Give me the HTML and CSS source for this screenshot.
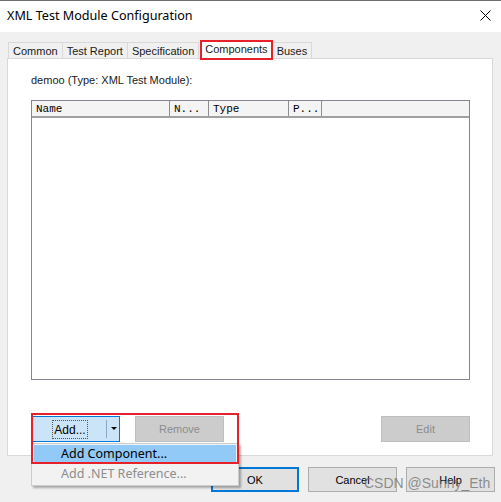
FILE: index.html
```html
<!DOCTYPE html>
<html lang="en">
<head>
<meta charset="UTF-8" />
<title>XML Test Module Configuration</title>
<link rel="stylesheet" href="styles.css">
</head>
<body>

<div class="window">
  <div class="titlebar">
    <span class="title">XML Test Module Configuration</span>
    <svg class="close" width="11" height="11" viewBox="0 0 11 11">
      <path d="M0.5 0.5 L10.5 10.5 M10.5 0.5 L0.5 10.5" stroke="#000" stroke-width="1" />
    </svg>
  </div>

  <div class="content">
    <div class="tabs">
      <div class="tab">Common</div>
      <div class="tab">Test Report</div>
      <div class="tab">Specification</div>
      <div class="tab active">Components</div>
      <div class="tab">Buses</div>
    </div>

    <div class="panel">
      <div class="caption">demoo (Type: XML Test Module):</div>
      <div class="listview">
        <div class="list-head">
          <div class="col col-name">Name</div>
          <div class="col col-n">N...</div>
          <div class="col col-type">Type</div>
          <div class="col col-p">P...</div>
        </div>
      </div>
      <div class="actions">
        <div class="split">
          <span class="split-main"><span class="focus">Add...</span></span>
          <span class="split-arrow"></span>
        </div>
        <button class="btn disabled">Remove</button>
        <span class="spacer"></span>
        <button class="btn disabled">Edit</button>
      </div>
    </div>

    <div class="footer">
      <button class="btn default">OK</button>
      <button class="btn">Cancel</button>
      <button class="btn">Help</button>
    </div>
  </div>

  <div class="menu">
    <div class="menu-item hot">Add Component...</div>
    <div class="menu-item off">Add .NET Reference...</div>
  </div>
  <div class="mark mark-add"></div>
  <div class="watermark">CSDN @Sunny_Eth</div>
</div>

</body>
</html>
```

FILE: styles.css
```css
body {
  margin: 0;
  background: #f0f0f0;
  font-family: "Liberation Sans", Arial, sans-serif;
  font-size: 11px;
  color: #000;
}
.window {
  position: relative;
  width: 501px;
  height: 502px;
  overflow: hidden;
}
.titlebar {
  height: 31px;
  border-top: 1px solid #6e6e6e;
  background: #fff;
  display: flex;
  align-items: center;
  justify-content: space-between;
  padding: 0 10px 0 7px;
}
.title {
  font-family: "Noto Sans", sans-serif;
  font-size: 12.6px;
  margin-top: -2px;
}
.close {
  margin-top: -2px;
}
.content {
  padding-top: 8px;
}
.tabs {
  display: flex;
  height: 18px;
  padding-left: 8px;
  position: relative;
  z-index: 1;
}
.tab {
  margin-top: 2px;
  height: 15px;
  padding: 0 4px;
  border: 1px solid #d9d9d9;
  border-bottom: none;
  border-left: none;
  background: #f0f0f0;
  line-height: 16px;
  color: #1a1a1a;
}
.tab:first-child {
  border-left: 1px solid #d9d9d9;
}
.tab.active {
  margin-top: 0;
  height: 16px;
  margin-left: 1px;
  padding: 0 3px;
  background: #fff;
  border: 2px solid #e8202a;
  line-height: 15px;
}
.panel {
  margin-left: 7px;
  height: 396px;
  background: #fff;
  border: 1px solid #d9d9d9;
  padding: 0 0 0 23px;
  box-sizing: content-box;
  width: 461px;
}
.caption {
  margin-top: 15px;
  height: 13px;
  color: #1a1a1a;
}
.listview {
  margin-top: 13px;
  width: 437px;
  height: 278px;
  border: 1px solid #828790;
  background: #fff;
}
.list-head {
  display: flex;
  height: 15px;
  background: #f4f4f4;
  border-bottom: 2px solid #a0a0a0;
  font-family: "Liberation Mono", "DejaVu Sans Mono", monospace;
  font-size: 11px;
  line-height: 16px;
}
.col {
  border-right: 1px solid #8c8c8c;
  padding-left: 4px;
  box-sizing: border-box;
}
.col-name { width: 138px; }
.col-n { width: 39px; }
.col-type { width: 80px; }
.col-p { width: 33px; }
.actions {
  display: flex;
  margin-top: 36px;
  height: 26px;
  padding-left: 1px;
}
.split {
  display: flex;
  width: 86px;
  height: 24px;
  border: 1px solid #0078d7;
  background: #cce4f7;
}
.split-main {
  flex: 1;
  display: flex;
  align-items: center;
  justify-content: center;
  border-right: 1px solid #8aa9c4;
  margin: 3px 0;
  padding-left: 1px;
}
.focus {
  border: 1px dotted #555;
  padding: 2px 1px 1px;
  font-size: 12px;
}
.split-arrow {
  width: 12px;
  position: relative;
}
.split-arrow::after {
  content: "";
  position: absolute;
  left: 4px;
  top: 10px;
  border-left: 3px solid transparent;
  border-right: 3px solid transparent;
  border-top: 3px solid #000;
}
.btn {
  font-family: "Liberation Sans", Arial, sans-serif;
  font-size: 11px;
  height: 26px;
  width: 89px;
  background: #e1e1e1;
  border: 1px solid #adadad;
  color: #000;
  padding: 0;
}
.btn.disabled {
  background: #cccccc;
  border-color: #bfbfbf;
  color: #8c8c8c;
  margin-left: 15px;
}
.spacer {
  flex: 1;
}
.actions .spacer + .btn {
  margin-right: 22px;
}
.footer {
  display: flex;
  gap: 9px;
  margin-top: 11px;
  padding-left: 211px;
}
.footer .btn {
  height: 25px;
  width: 89px;
  text-align: center;
  background: #e1e1e1;
}
.footer .btn.default {
  border: 2px solid #0078d7;
  width: 88px;
}
.menu {
  position: absolute;
  left: 31px;
  top: 443px;
  width: 202px;
  padding: 1px 2px;
  background: #f2f2f2;
  border: 1px solid #cccccc;
  box-shadow: 2px 2px 2px rgb(0 0 0 / 0.3);
  font-family: "Noto Sans", sans-serif;
  font-size: 12.5px;
}
.menu-item {
  height: 19px;
  line-height: 18px;
  padding-left: 27px;
}
.menu-item.hot {
  background: #91c9f7;
}
.menu-item.off {
  margin-top: 1px;
  color: #8d8d8d;
}
.mark {
  position: absolute;
  border: 2px solid #e8202a;
  pointer-events: none;
}
.mark-add {
  left: 31px;
  top: 413px;
  width: 204px;
  height: 47px;
}
.watermark {
  position: absolute;
  left: 364px;
  top: 475px;
  white-space: nowrap;
  font-family: "Liberation Sans", Arial, sans-serif;
  font-size: 14px;
  color: rgb(110 110 110 / 0.75);
}
```
